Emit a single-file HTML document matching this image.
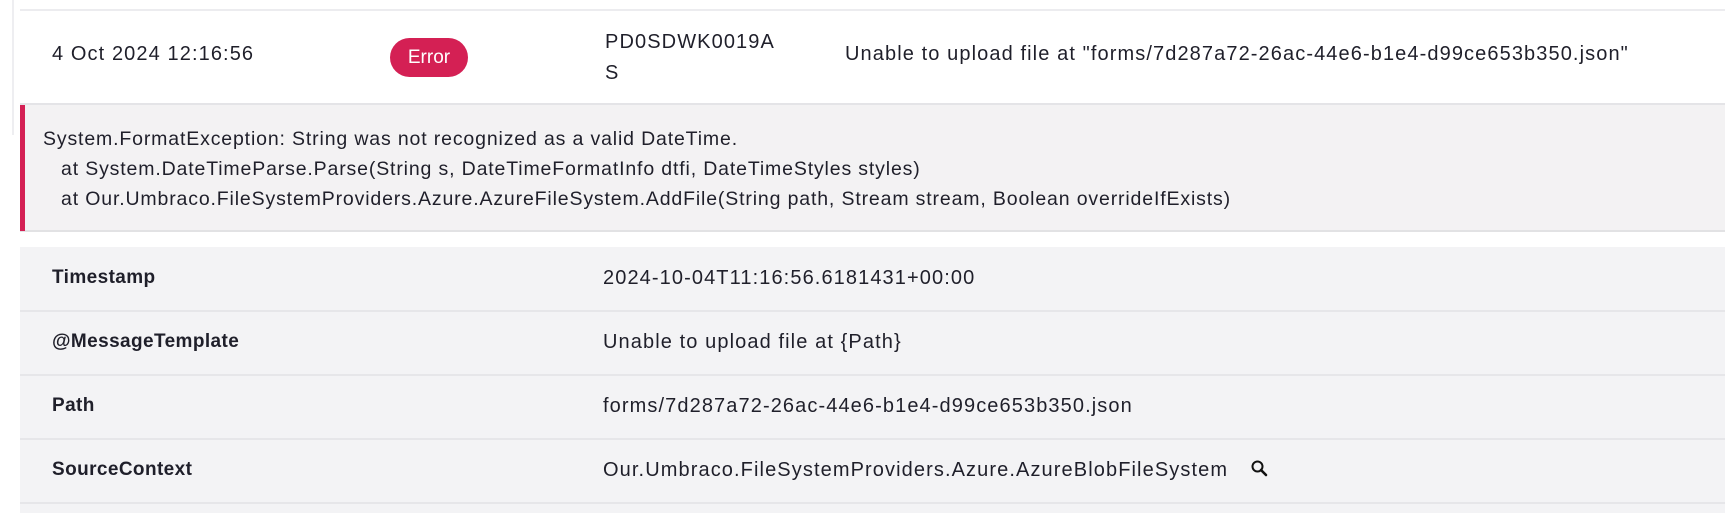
<!DOCTYPE html>
<html><head><style>
html,body{margin:0;padding:0;background:#fff;width:1725px;height:513px;overflow:hidden;font-family:"Liberation Sans",sans-serif;color:#1b264f;}
.abs{position:absolute}
.t{font-size:20px;letter-spacing:1.1px;color:#1f1f2a;white-space:nowrap}
.b{font-size:19px;letter-spacing:0.4px;font-weight:bold}
</style></head><body>
<div class="abs" style="left:20px;top:9px;width:1705px;height:2px;background:#ececef"></div>
<div class="abs" style="left:12px;top:0;width:2px;height:135px;background:#eeeef1"></div>
<div class="abs" style="left:20px;top:103px;width:1705px;height:2px;background:#e4e4e7"></div>
<div class="abs t" style="left:52px;top:43px">4 Oct 2024 12:16:56</div>
<div class="abs" style="left:390px;top:38px;width:78px;height:39px;border-radius:20px;background:#d42054;color:#fff;font-size:19px;line-height:39px;text-align:center">Error</div>
<div class="abs t" style="left:605px;top:27px;line-height:31px">PD0SDWK0019A<br>S</div>
<div class="abs t" style="left:845px;top:43px">Unable to upload file at "forms/7d287a72-26ac-44e6-b1e4-d99ce653b350.json"</div>
<div class="abs" style="left:20px;top:105px;width:1705px;height:125px;background:#f3f2f3;border-bottom:2px solid #e2e2e4"></div>
<div class="abs" style="left:20px;top:105px;width:5px;height:126px;background:#d42054"></div>
<div class="abs t" style="left:43px;top:124px;line-height:30px;font-size:19.5px;letter-spacing:0.85px">System.FormatException: String was not recognized as a valid DateTime.</div>
<div class="abs t" style="left:61px;top:154px;line-height:30px;font-size:19.5px;letter-spacing:0.85px">at System.DateTimeParse.Parse(String s, DateTimeFormatInfo dtfi, DateTimeStyles styles)<br>at Our.Umbraco.FileSystemProviders.Azure.AzureFileSystem.AddFile(String path, Stream stream, Boolean overrideIfExists)</div>
<div class="abs" style="left:20px;top:247px;width:1705px;height:266px;background:#f3f3f5"></div>
<div class="abs" style="left:20px;top:310px;width:1705px;height:2px;background:#e6e6e9"></div>
<div class="abs" style="left:20px;top:374px;width:1705px;height:2px;background:#e6e6e9"></div>
<div class="abs" style="left:20px;top:438px;width:1705px;height:2px;background:#e6e6e9"></div>
<div class="abs" style="left:20px;top:502px;width:1705px;height:2px;background:#e6e6e9"></div>
<div class="abs t b" style="left:52px;top:267px">Timestamp</div>
<div class="abs t" style="left:603px;top:267px">2024-10-04T11:16:56.6181431+00:00</div>
<div class="abs t b" style="left:52px;top:331px">@MessageTemplate</div>
<div class="abs t" style="left:603px;top:331px">Unable to upload file at {Path}</div>
<div class="abs t b" style="left:52px;top:395px">Path</div>
<div class="abs t" style="left:603px;top:395px">forms/7d287a72-26ac-44e6-b1e4-d99ce653b350.json</div>
<div class="abs t b" style="left:52px;top:459px">SourceContext</div>
<div class="abs t" style="left:603px;top:459px">Our.Umbraco.FileSystemProviders.Azure.AzureBlobFileSystem</div>
<svg class="abs" style="left:1250px;top:459px" width="20" height="20" viewBox="0 0 20 20"><circle cx="7.5" cy="7.5" r="5" fill="none" stroke="#111" stroke-width="2"/><path d="M11 11 L16 16" stroke="#111" stroke-width="2.6" stroke-linecap="round"/></svg>
</body></html>
